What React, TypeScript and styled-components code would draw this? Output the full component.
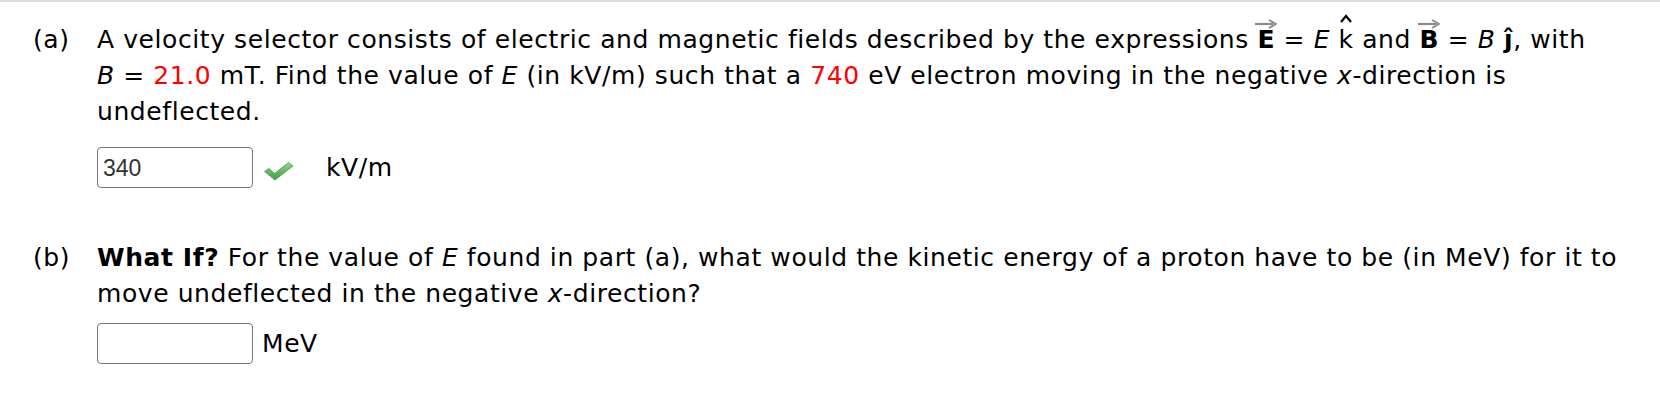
import React from "react";
import styled, { createGlobalStyle } from "styled-components";

const Global = createGlobalStyle`
  html, body { margin: 0; padding: 0; background: #fff; }
  body { font-family: "DejaVu Sans", Verdana, sans-serif; color: #000; }
`;

const Page = styled.div`
  width: 1660px;
  height: 414px;
  border-top: 2px solid #dcdcdc;
  box-sizing: border-box;
  padding: 20px 20px 0 33px;
`;

const Part = styled.div<{ $gap?: number }>`
  display: grid;
  grid-template-columns: 64px 1fr;
  margin-bottom: ${(p) => p.$gap ?? 0}px;
  font-size: 25px;
  letter-spacing: 0.58px;
  line-height: 36px;
`;

const Label = styled.div``;

const Body = styled.div``;

const Text = styled.p`
  margin: 0;
`;

const Red = styled.span`
  color: #ff0000;
`;

const Vec = styled.span`
  position: relative;
  display: inline-block;
  font-weight: bold;
`;

const Arrow = styled.svg`
  position: absolute;
  left: 50%;
  top: 0;
  transform: translate(-50%, -3px);
`;

const Hat = styled.span`
  position: relative;
  display: inline-block;
`;

const HatMark = styled.svg`
  position: absolute;
  left: 50%;
  top: -8px;
  transform: translateX(-50%);
`;

const AnswerRow = styled.div<{ $top: number }>`
  display: flex;
  align-items: center;
  margin-top: ${(p) => p.$top}px;
  height: 41px;
`;

const Input = styled.div`
  width: 156px;
  height: 41px;
  box-sizing: border-box;
  border: 1.5px solid #767676;
  border-radius: 4px;
  padding: 0 5px;
  display: flex;
  align-items: center;
  font-family: "Liberation Sans", Arial, sans-serif;
  font-size: 23px;
  letter-spacing: 0;
  color: #333;
`;

const Check = styled.svg`
  margin: 6px 0 0 10px;
`;

const Unit = styled.span<{ $left: number }>`
  margin-left: ${(p) => p.$left}px;
`;

const VecArrow = () => (
  <Arrow width="24" height="10" viewBox="0 0 24 10">
    <path d="M1 5 H19" stroke="#8a8a8a" strokeWidth="2.2" fill="none" />
    <path d="M15 1 L22 5 L15 9" stroke="#8a8a8a" strokeWidth="2" fill="none" strokeLinejoin="round" />
  </Arrow>
);

const HatIcon = () => (
  <HatMark width="14" height="9" viewBox="0 0 14 9">
    <path d="M2 8 L7 2 L12 8" stroke="#000" strokeWidth="2.2" fill="none" />
  </HatMark>
);

const CheckIcon = () => (
  <Check width="32" height="20" viewBox="0 0 32 20">
    <defs>
      <linearGradient id="cg" x1="0" y1="0" x2="0" y2="1">
        <stop offset="0" stopColor="#8ed68a" />
        <stop offset="1" stopColor="#3f9c42" />
      </linearGradient>
    </defs>
    <path
      d="M1.5 10.5 L6 7.5 L11.5 12.5 L25.5 1.5 L30 5 L12 19 Z"
      fill="url(#cg)"
      stroke="#4a9a4a"
      strokeWidth="0.8"
      strokeLinejoin="round"
    />
  </Check>
);

export default function App() {
  return (
    <>
      <Global />
      <Page>
        <Part $gap={52}>
          <Label>(a)</Label>
          <Body>
            <Text>
              A velocity selector consists of electric and magnetic fields described by the expressions{" "}
              <Vec>
                E
                <VecArrow />
              </Vec>{" "}
              = <i>E</i>{" "}
              <Hat>
                k
                <HatIcon />
              </Hat>{" "}
              and{" "}
              <Vec>
                B
                <VecArrow />
              </Vec>{" "}
              = <i>B</i> <b>ĵ</b>, with <i>B</i>{"\u00a0=\u00a0"}
              <Red>21.0</Red> mT. Find the value of <i>E</i> (in kV/m) such that a <Red>740</Red> eV electron moving
              in the negative <i>x</i>-direction is undeflected.
            </Text>
            <AnswerRow $top={17}>
              <Input>340</Input>
              <CheckIcon />
              <Unit $left={31}>kV/m</Unit>
            </AnswerRow>
          </Body>
        </Part>
        <Part>
          <Label>(b)</Label>
          <Body>
            <Text>
              <b>What If?</b> For the value of <i>E</i> found in part (a), what would the kinetic energy of a proton have
              to be (in MeV) for it to move undeflected in the negative <i>x</i>-direction?
            </Text>
            <AnswerRow $top={11}>
              <Input />
              <Unit $left={9}>MeV</Unit>
            </AnswerRow>
          </Body>
        </Part>
      </Page>
    </>
  );
}
